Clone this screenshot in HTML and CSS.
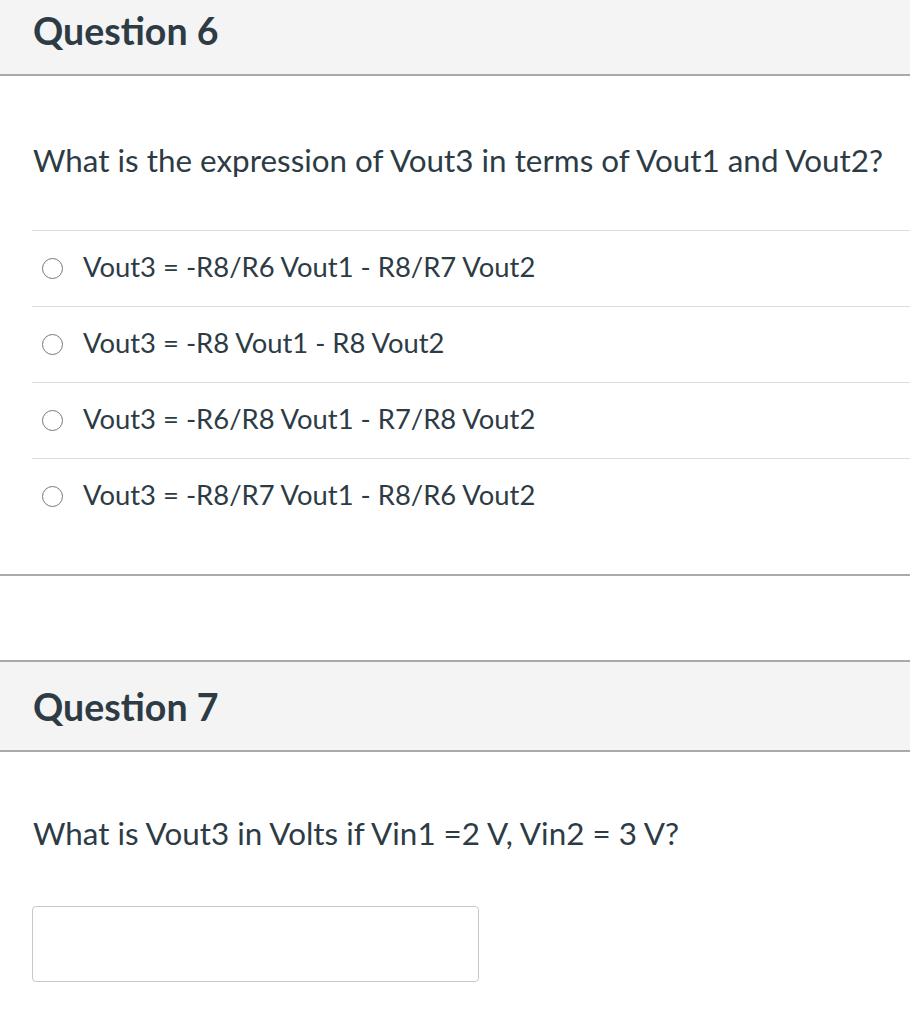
FILE: index.html
```html
<!DOCTYPE html>
<html>
<head>
<meta charset="utf-8">
<link rel="stylesheet" href="styles.css">
</head>
<body>
<div class="page">
  <section class="question q6">
    <div class="q-header"><h2>Question 6</h2></div>
    <div class="q-body">
      <p class="q-text">What is the expression of Vout3 in terms of Vout1 and Vout2?</p>
      <div class="answers">
        <label class="answer"><span class="radio"></span><span>Vout3 = -R8/R6 Vout1 - R8/R7 Vout2</span></label>
        <label class="answer"><span class="radio"></span><span>Vout3 = -R8 Vout1 - R8 Vout2</span></label>
        <label class="answer"><span class="radio"></span><span>Vout3 = -R6/R8 Vout1 - R7/R8 Vout2</span></label>
        <label class="answer"><span class="radio"></span><span>Vout3 = -R8/R7 Vout1 - R8/R6 Vout2</span></label>
      </div>
    </div>
  </section>
  <section class="question q7">
    <div class="q-header"><h2>Question 7</h2></div>
    <div class="q-body">
      <p class="q-text">What is Vout3 in Volts if Vin1 =2 V, Vin2 = 3 V?</p>
      <div class="input-box"></div>
    </div>
  </section>
</div>
</body>
</html>
```
FILE: styles.css
```css
html, body {
  margin: 0;
  padding: 0;
  background: #fff;
}
body {
  font-family: Lato, "Noto Sans", sans-serif;
  color: #2d3b45;
}
.page {
  margin-top: -16px;
}
.question {
  border-top: 2px solid #aaa;
  border-bottom: 2px solid #aaa;
}
.q7 {
  margin-top: 84px;
}
.q-header {
  background: #f4f4f4;
  border-bottom: 2px solid #aaa;
  height: 88px;
  display: flex;
  align-items: center;
  padding-left: 33px;
}
.q-header h2 {
  margin: 0;
  font-size: 37.5px;
  font-weight: 700;
}
.q-body {
  padding-left: 32px;
}
.q-text {
  margin: 0;
  padding: 66px 0 52px 1px;
  font-size: 31.4px;
  line-height: 36px;
}
.q7 .q-text {
  padding: 63px 0 55px 1px;
}
.answers {
  padding-bottom: 40px;
}
.answer {
  display: flex;
  align-items: center;
  padding-bottom: 4px;
  box-sizing: border-box;
  height: 76px;
  border-top: 1px solid #ddd;
  font-size: 27.4px;
}
.radio {
  width: 21px;
  height: 21px;
  border: 1.6px solid #777;
  border-radius: 50%;
  margin: 3px 20px 0 10px;
  box-sizing: border-box;
  flex: none;
}
.q7 .q-body {
  padding-bottom: 31px;
}
.input-box {
  width: 447px;
  height: 76px;
  border: 1.5px solid #c8c8c8;
  border-radius: 4px;
  box-sizing: border-box;
}
```
